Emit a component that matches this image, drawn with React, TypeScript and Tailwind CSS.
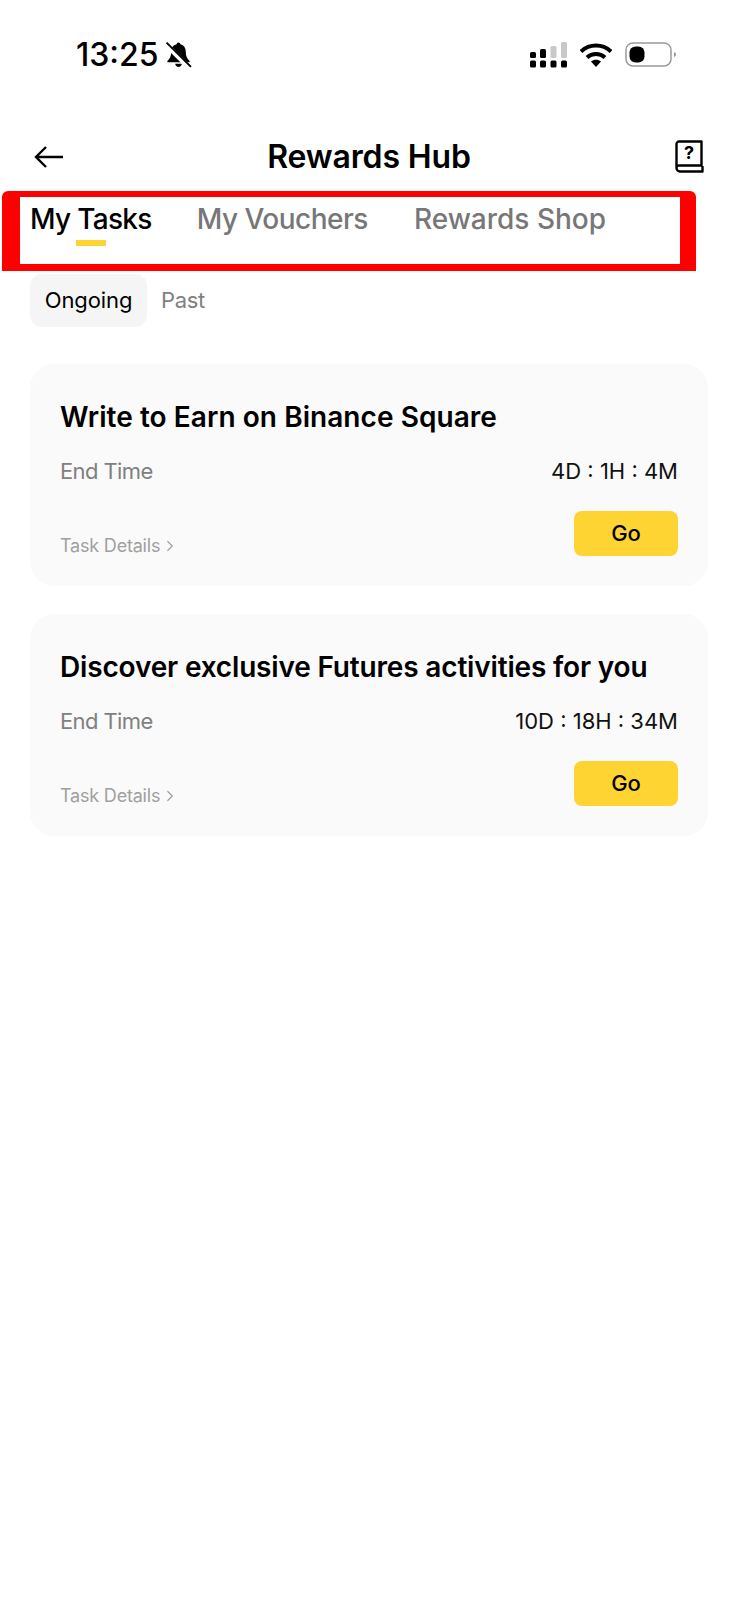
import React from 'react';
import { ChevronRight } from 'lucide-react';

const tasks = [
  { title: 'Write to Earn on Binance Square', left: '4D : 1H : 4M', titleClass: 'tracking-[0.06px]' },
  { title: 'Discover exclusive Futures activities for you', left: '10D : 18H : 34M', titleClass: 'tracking-[-0.17px]' },
];

function BellOff() {
  return (
    <svg width="27" height="28" viewBox="0 0 26 26" className="ml-[6px]">
      <path d="M13 1c-1 0-1.700.7-1.800 1.700C7.800 3.500 6 6.300 6 9.700c0 4.500-1.200 6.800-3.500 8.800-.6.7-.2 1.600.7 1.600h19.600c.9 0 1.300-.9.7-1.600-2.300-2-3.500-4.300-3.500-8.800 0-3.400-1.800-6.200-5.200-7C14.700 1.700 14 1 13 1z" fill="#000" />
      <path d="M9.800 21.500h6.400c-.2 1.800-1.500 3-3.200 3s-3-1.200-3.200-3z" fill="#000" />
      <path d="M2 4 24 26" stroke="#fff" strokeWidth="4.500" />
      <path d="M1.500 1 25 24.500" stroke="#000" strokeWidth="1.800" />
    </svg>
  );
}

function Signal() {
  return (
    <svg width="38" height="26" viewBox="0 0 38 26">
      <rect x="1" y="10" width="6" height="6" rx="1.500" fill="#000" />
      <rect x="11" y="7" width="6" height="9" rx="1.500" fill="#000" />
      <rect x="21.500" y="4" width="6" height="12" rx="1.500" fill="#c8c8c8" />
      <rect x="32" y="0" width="6" height="16" rx="1.500" fill="#c8c8c8" />
      <rect x="1" y="18.500" width="6" height="7" rx="1.500" fill="#000" />
      <rect x="11" y="18.500" width="6" height="7" rx="1.500" fill="#000" />
      <rect x="21.500" y="18.500" width="6" height="7" rx="1.500" fill="#000" />
      <rect x="32" y="18.500" width="6" height="7" rx="1.500" fill="#000" />
    </svg>
  );
}

function Wifi() {
  return (
    <svg width="32" height="24" viewBox="0 0 32 24">
      <path d="M1 8.500C9.500.500 22.500.500 31 8.500" fill="none" stroke="#000" strokeWidth="4" />
      <path d="M7 14.500c5-4.600 13-4.600 18 0" fill="none" stroke="#000" strokeWidth="4" />
      <path d="M11 18.500c3-2.400 7-2.400 10 0l-5 5.500z" fill="#000" />
    </svg>
  );
}

function Battery() {
  return (
    <svg width="52" height="26" viewBox="0 0 52 26">
      <rect x="1" y="1" width="45" height="23" rx="7" fill="#fff" stroke="#9a9a9a" strokeWidth="1.500" />
      <rect x="4.500" y="4.500" width="15" height="16" rx="6" fill="#000" />
      <path d="M49 10c1.500.4 2 1.500 2 2.500s-.5 2.100-2 2.500z" fill="#9a9a9a" />
    </svg>
  );
}

function GuideBook() {
  return (
    <svg width="30" height="34" viewBox="0 0 30 34" fill="none">
      <path d="M2.500 28V4a2.500 2.500 0 0 1 2.500-2.500H27.500V25.500H5A2.500 2.500 0 0 0 2.500 28a3.500 3.500 0 0 0 3.500 3.500H28.500V26" stroke="#000" strokeWidth="2.400" strokeLinejoin="round" />
      <text x="15" y="19" textAnchor="middle" fontSize="18" fontWeight="700" fill="#000" fontFamily="Inter, sans-serif">?</text>
    </svg>
  );
}

function TaskCard({ title, left, titleClass }: { title: string; left: string; titleClass: string }) {
  return (
    <div className="h-[222px] rounded-[24px] bg-[#fafafa] pl-[30px] pr-[30px] pt-[33px]">
      <div className={`text-[28px] font-semibold leading-[40px] text-black ${titleClass}`}>{title}</div>
      <div className="mt-[18px] flex items-center justify-between text-[22px] leading-[32px]">
        <span className="tracking-[-0.6px] text-[#808080]">End Time</span>
        <span className="text-[#111]">{left}</span>
      </div>
      <div className="mt-[24px] flex items-end justify-between">
        <div className="mb-[-2px] flex items-center text-[18px] leading-[24px] tracking-[-0.2px] text-[#a0a0a0]">
          Task Details
          <ChevronRight size={18} strokeWidth={1.6} className="ml-[1px]" />
        </div>
        <button className="flex h-[45px] w-[104px] items-center justify-center rounded-[8px] bg-[#fdd432] text-[22px] font-medium text-black">
          Go
        </button>
      </div>
    </div>
  );
}

export default function App() {
  return (
    <div className="min-h-[1600px] w-[738px] bg-white font-['Inter',sans-serif]">
      {/* status bar */}
      <div className="flex items-center justify-between pl-[76px] pr-[61px] pt-[40px]">
        <div className="flex items-center">
          <span className="text-[32px] font-medium leading-[30px] text-black">13:25</span>
          <BellOff />
        </div>
        <div className="flex items-center gap-[13px]">
          <Signal />
          <Wifi />
          <Battery />
        </div>
      </div>

      {/* header */}
      <div className="mt-[70px] flex h-[34px] items-center justify-between pl-[34px] pr-[34px]">
        <svg width="30" height="24" viewBox="0 0 30 24" fill="none">
          <path d="M29 12H2M12 2 2 12l10 10" stroke="#000" strokeWidth="2.400" />
        </svg>
        <div className="text-[32px] font-semibold leading-[40px] tracking-[-0.15px] text-black">Rewards Hub</div>
        <GuideBook />
      </div>

      {/* tabs, red box is part of the screenshot */}
      <div className="ml-[2px] mt-[17px] h-[80px] w-[694px] rounded-t-[6px] border-t-[6px] border-r-[16px] border-b-[7px] border-l-[18px] border-[#ff0000] bg-white">
        <div className="flex pl-[10px] pt-[2px] text-[28px] leading-[40px] text-[#777]">
          <div className="relative font-medium tracking-[-0.7px] text-black">
            My Tasks
            <div className="absolute left-[46px] top-[41px] h-[6px] w-[30px] bg-[#fdd432]" />
          </div>
          <div className="ml-[45px] font-medium tracking-[-0.5px]">My Vouchers</div>
          <div className="ml-[46px] font-medium tracking-[0px]">Rewards Shop</div>
        </div>
      </div>

      {/* sub tabs */}
      <div className="ml-[30px] mt-[3px] flex items-center">
        <div className="flex h-[53px] w-[117px] items-center justify-center rounded-[12px] bg-[#f5f5f5] text-[22px] tracking-[-0.1px] text-black">
          Ongoing
        </div>
        <div className="ml-[14px] text-[22px] tracking-[-0.3px] text-[#808080]">Past</div>
      </div>

      {/* task cards */}
      <div className="ml-[30px] mr-[30px] mt-[37px] flex flex-col gap-[28px]">
        {tasks.map((t) => (
          <TaskCard key={t.title} title={t.title} left={t.left} titleClass={t.titleClass} />
        ))}
      </div>
    </div>
  );
}
